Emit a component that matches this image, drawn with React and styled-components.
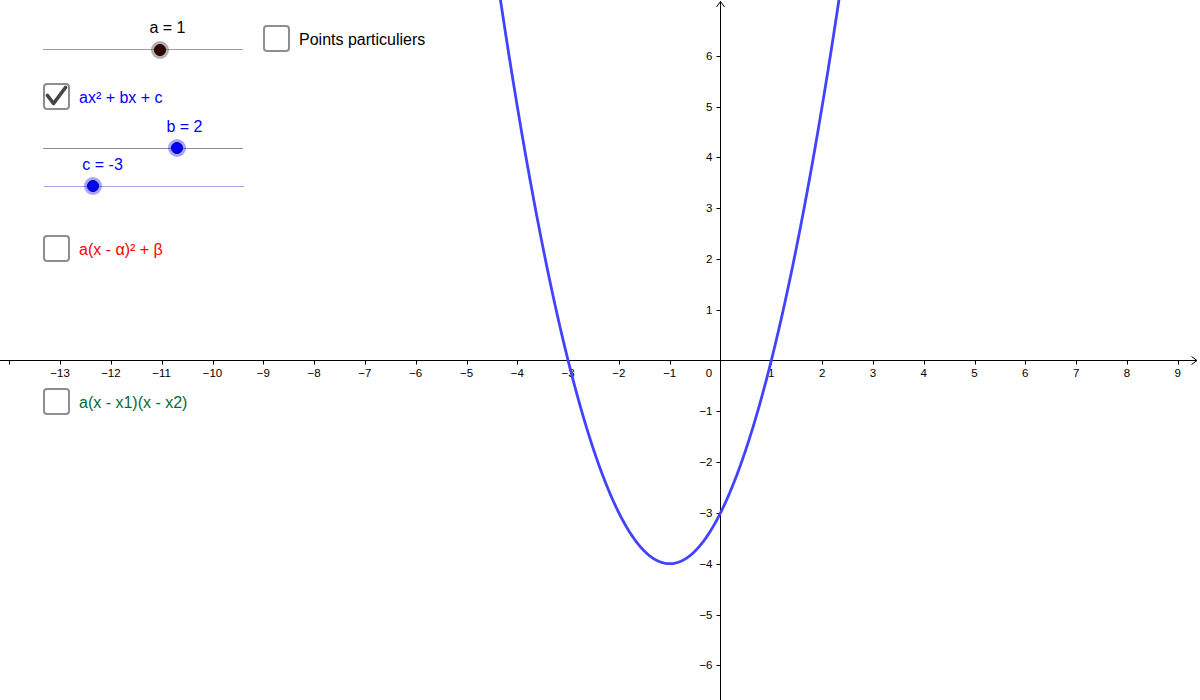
import React from 'react'
import styled, { createGlobalStyle } from 'styled-components'

const GlobalStyle = createGlobalStyle`
  html, body {
    margin: 0;
    padding: 0;
    background: #fff;
  }
  body {
    font-family: "Liberation Sans", Arial, sans-serif;
  }
`

// graph coordinates
const UNIT = 50.8
const OX = 720.5
const OY = 360.5
const W = 1200
const H = 700

const toX = x => OX + x * UNIT
const toY = y => OY - y * UNIT
const f = x => x * x + 2 * x - 3

const MINUS = '\u2212'
const fmt = n => (n < 0 ? MINUS + Math.abs(n) : String(n))

function parabolaPath() {
  const pts = []
  for (let x = -4.5; x <= 2.5; x += 0.02) {
    pts.push(toX(x).toFixed(2) + ' ' + toY(f(x)).toFixed(2))
  }
  return 'M' + pts.join(' L')
}

const range = (a, b) => {
  const out = []
  for (let i = a; i <= b; i++) out.push(i)
  return out
}

const SLIDER_MIN = -5.9
const SLIDER_MAX = 5.85
const SLIDER_W = 200

const Applet = styled.div`
  position: relative;
  width: ${W}px;
  height: ${H}px;
  overflow: hidden;
  background: #fff;
`

const Graph = styled.svg`
  display: block;
  font-family: "Liberation Sans", Arial, sans-serif;
  font-size: 11.5px;
`

const Overlay = styled.div`
  position: absolute;
  top: 0;
  left: 0;
  display: grid;
  grid-template-columns: 220px auto;
  align-items: start;
  padding-left: 43px;
`

const Column = styled.div`
  display: flex;
  flex-direction: column;
  padding-top: 19px;
`

const SliderBox = styled.div`
  position: relative;
  width: ${SLIDER_W}px;
  height: 36px;
  margin-top: ${p => p.$top || 0}px;
  margin-left: ${p => p.$shift || 0}px;
`

const SliderLabel = styled.span`
  position: absolute;
  top: 0;
  transform: translateX(-11px);
  font-size: 16px;
  line-height: 18px;
  white-space: nowrap;
  color: ${p => p.$color};
`

const Track = styled.div`
  position: absolute;
  left: 0;
  right: 0;
  top: 30px;
  height: 1px;
  background: ${p => p.$color};
`

const Knob = styled.span`
  position: absolute;
  top: 30.5px;
  width: 10px;
  height: 10px;
  border-radius: 50%;
  transform: translate(-50%, -50%);
  background: ${p => p.$fill};
  border: 1px solid ${p => p.$edge};
  box-shadow: 0 0 0 3px ${p => p.$halo};
`

const CheckRow = styled.label`
  display: flex;
  align-items: center;
  gap: 9px;
  margin-top: ${p => p.$top || 0}px;
  margin-left: ${p => p.$shift || 0}px;
  cursor: pointer;
`

const Box = styled.span`
  box-sizing: border-box;
  display: flex;
  align-items: center;
  justify-content: center;
  width: 27px;
  height: 27px;
  border: 2px solid #8e8e8e;
  border-radius: 4px;
  background: #fff;
  flex: none;
`

const CheckText = styled.span`
  font-size: 16px;
  line-height: 18px;
  padding-top: 2px;
  white-space: nowrap;
  color: ${p => p.$color};
`

function Slider({ name, value, color, track, fill, edge, halo, top, shift }) {
  const pos = ((value - SLIDER_MIN) / (SLIDER_MAX - SLIDER_MIN)) * SLIDER_W
  return (
    <SliderBox $top={top} $shift={shift}>
      <SliderLabel $color={color} style={{ left: pos }}>
        {name} = {value}
      </SliderLabel>
      <Track $color={track} />
      <Knob $fill={fill} $edge={edge} $halo={halo} style={{ left: pos }} />
    </SliderBox>
  )
}

function Checkbox({ checked, children, color, top, shift }) {
  return (
    <CheckRow $top={top} $shift={shift}>
      <Box>
        {checked && (
          <svg width="23" height="23" viewBox="0 0 23 23">
            <path
              d="M2.5 10.5 L8.5 18.5 L20.5 2.5"
              fill="none"
              stroke="#444"
              strokeWidth="3.6"
              strokeLinecap="round"
              strokeLinejoin="round"
            />
          </svg>
        )}
      </Box>
      <CheckText $color={color}>{children}</CheckText>
    </CheckRow>
  )
}

function Axes() {
  const xs = range(-14, 9)
  const ys = range(-6, 6).filter(v => v !== 0)
  return (
    <Graph width={W} height={H} viewBox={`0 0 ${W} ${H}`}>
      <g stroke="#000" strokeWidth="1" fill="none">
        <path d={`M0 ${OY} H${W - 3}`} />
        <path d={`M${W - 8.5} ${OY - 4} L${W - 3} ${OY} L${W - 8.5} ${OY + 4}`} />
        <path d={`M${OX} ${H} V1.5`} />
        <path d={`M${OX - 4} 7 L${OX} 1.5 L${OX + 4} 7`} />
        {xs
          .filter(v => v !== 0)
          .map(v => (
            <path key={'tx' + v} d={`M${Math.round(toX(v)) + 0.5} ${OY} v4`} />
          ))}
        {ys.map(v => (
          <path key={'ty' + v} d={`M${OX - 4} ${Math.round(toY(v)) + 0.5} h4`} />
        ))}
      </g>
      <g fill="#000">
        {xs
          .filter(v => v !== 0 && v !== -14)
          .map(v => (
            <text key={'lx' + v} x={toX(v)} y={377} textAnchor="middle">
              {fmt(v)}
            </text>
          ))}
        <text x={709} y={377} textAnchor="middle">
          0
        </text>
        {ys.map(v => (
          <text key={'ly' + v} x={712.5} y={toY(v) + 4} textAnchor="end">
            {fmt(v)}
          </text>
        ))}
      </g>
      <path d={parabolaPath()} fill="none" stroke="#4242ff" strokeWidth="2.8" />
    </Graph>
  )
}

export default function App() {
  return (
    <>
      <GlobalStyle />
      <Applet>
        <Axes />
        <Overlay>
          <Column>
            <Slider
              name="a"
              value={1}
              color="#000"
              track="#a09a9a"
              fill="#330000"
              edge="#1a0000"
              halo="rgba(90, 80, 80, 0.45)"
            />
            <Checkbox checked color="#0000ff" top={28}>
              ax² + bx + c
            </Checkbox>
            <Slider
              name="b"
              value={2}
              color="#0000ff"
              track="#8f8f8f"
              fill="#0000ff"
              edge="#000080"
              halo="rgba(0, 0, 255, 0.35)"
              top={7.5}
            />
            <Slider
              name="c"
              value={-3}
              color="#0000ff"
              track="#a3a3e6"
              fill="#0000ff"
              edge="#000080"
              halo="rgba(0, 0, 255, 0.35)"
              top={2}
              shift={1}
            />
            <Checkbox color="#ff0000" top={43.5}>
              a(x - α)² + β
            </Checkbox>
            <Checkbox color="#006b3c" top={126}>
              a(x - x1)(x - x2)
            </Checkbox>
          </Column>
          <Checkbox color="#000" top={25}>
            Points particuliers
          </Checkbox>
        </Overlay>
      </Applet>
    </>
  )
}
